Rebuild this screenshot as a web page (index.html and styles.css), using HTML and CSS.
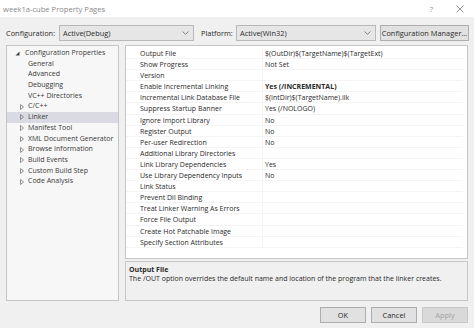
FILE: index.html
```html
<!DOCTYPE html>
<html lang="en">

<head>
  <meta charset="UTF-8">
  <title>week1a-cube Property Pages</title>
  <link rel="stylesheet" href="styles.css">
</head>

<body>
  <div class="dialog">
    <!-- title bar -->
    <div class="titlebar">
      <span class="title">week1a-cube Property Pages</span>
      <span class="help">?</span>
      <span class="close">
        <svg width="8" height="8" viewBox="0 0 8 8"><path d="M0.5 0.5L7.5 7.5M7.5 0.5L0.5 7.5" stroke="#888" stroke-width="0.9"/></svg>
      </span>
    </div>

    <!-- configuration row -->
    <div class="configrow">
      <span class="label">Configuration:</span>
      <div class="select sel-config">
        <span>Active(Debug)</span>
        <svg class="arrow" width="7" height="4" viewBox="0 0 7 4"><path d="M0.5 0.5L3.5 3.3L6.5 0.5" fill="none" stroke="#777" stroke-width="0.9"/></svg>
      </div>
      <span class="label plat">Platform:</span>
      <div class="select sel-platform">
        <span>Active(Win32)</span>
        <svg class="arrow" width="7" height="4" viewBox="0 0 7 4"><path d="M0.5 0.5L3.5 3.3L6.5 0.5" fill="none" stroke="#777" stroke-width="0.9"/></svg>
      </div>
      <div class="btn cfgmgr">Configuration Manager...</div>
    </div>

    <div class="main">
      <!-- tree -->
      <div class="tree">
        <div class="node top">
          <svg class="tri" width="5" height="5" viewBox="0 0 5 5"><path d="M4.5 0.5L4.5 4.5L0.5 4.5Z" fill="#444"/></svg>
          Configuration Properties
        </div>
        <div class="node leaf">General</div>
        <div class="node leaf">Advanced</div>
        <div class="node leaf">Debugging</div>
        <div class="node leaf">VC++ Directories</div>
        <div class="node sub"><svg class="tri" width="4" height="6" viewBox="0 0 4 6"><path d="M0.5 0.5L3.5 3L0.5 5.5Z" fill="none" stroke="#777" stroke-width="0.8"/></svg>C/C++</div>
        <div class="node sub selected"><svg class="tri" width="4" height="6" viewBox="0 0 4 6"><path d="M0.5 0.5L3.5 3L0.5 5.5Z" fill="none" stroke="#777" stroke-width="0.8"/></svg>Linker</div>
        <div class="node sub"><svg class="tri" width="4" height="6" viewBox="0 0 4 6"><path d="M0.5 0.5L3.5 3L0.5 5.5Z" fill="none" stroke="#777" stroke-width="0.8"/></svg>Manifest Tool</div>
        <div class="node sub"><svg class="tri" width="4" height="6" viewBox="0 0 4 6"><path d="M0.5 0.5L3.5 3L0.5 5.5Z" fill="none" stroke="#777" stroke-width="0.8"/></svg>XML Document Generator</div>
        <div class="node sub"><svg class="tri" width="4" height="6" viewBox="0 0 4 6"><path d="M0.5 0.5L3.5 3L0.5 5.5Z" fill="none" stroke="#777" stroke-width="0.8"/></svg>Browse Information</div>
        <div class="node sub"><svg class="tri" width="4" height="6" viewBox="0 0 4 6"><path d="M0.5 0.5L3.5 3L0.5 5.5Z" fill="none" stroke="#777" stroke-width="0.8"/></svg>Build Events</div>
        <div class="node sub"><svg class="tri" width="4" height="6" viewBox="0 0 4 6"><path d="M0.5 0.5L3.5 3L0.5 5.5Z" fill="none" stroke="#777" stroke-width="0.8"/></svg>Custom Build Step</div>
        <div class="node sub"><svg class="tri" width="4" height="6" viewBox="0 0 4 6"><path d="M0.5 0.5L3.5 3L0.5 5.5Z" fill="none" stroke="#777" stroke-width="0.8"/></svg>Code Analysis</div>
      </div>

      <div class="right">
        <!-- property grid -->
        <div class="grid">
          <div class="row"><span class="name">Output File</span><span class="value">$(OutDir)$(TargetName)$(TargetExt)</span></div>
          <div class="row"><span class="name">Show Progress</span><span class="value">Not Set</span></div>
          <div class="row"><span class="name">Version</span><span class="value"></span></div>
          <div class="row"><span class="name">Enable Incremental Linking</span><span class="value bold">Yes (/INCREMENTAL)</span></div>
          <div class="row"><span class="name">Incremental Link Database File</span><span class="value">$(IntDir)$(TargetName).ilk</span></div>
          <div class="row"><span class="name">Suppress Startup Banner</span><span class="value">Yes (/NOLOGO)</span></div>
          <div class="row"><span class="name">Ignore Import Library</span><span class="value">No</span></div>
          <div class="row"><span class="name">Register Output</span><span class="value">No</span></div>
          <div class="row"><span class="name">Per-user Redirection</span><span class="value">No</span></div>
          <div class="row"><span class="name">Additional Library Directories</span><span class="value"></span></div>
          <div class="row"><span class="name">Link Library Dependencies</span><span class="value">Yes</span></div>
          <div class="row"><span class="name">Use Library Dependency Inputs</span><span class="value">No</span></div>
          <div class="row"><span class="name">Link Status</span><span class="value"></span></div>
          <div class="row"><span class="name">Prevent Dll Binding</span><span class="value"></span></div>
          <div class="row"><span class="name">Treat Linker Warning As Errors</span><span class="value"></span></div>
          <div class="row"><span class="name">Force File Output</span><span class="value"></span></div>
          <div class="row"><span class="name">Create Hot Patchable Image</span><span class="value"></span></div>
          <div class="row"><span class="name">Specify Section Attributes</span><span class="value"></span></div>
        </div>

        <!-- description -->
        <div class="desc">
          <div class="desc-title">Output File</div>
          <div class="desc-text">The /OUT option overrides the default name and location of the program that the linker creates.</div>
        </div>
      </div>
    </div>

    <div class="buttons">
      <div class="btn">OK</div>
      <div class="btn">Cancel</div>
      <div class="btn disabled">Apply</div>
    </div>
  </div>
</body>

</html>
```

FILE: styles.css
```css
body {
  margin: 0;
  background-color: #f0f0f0;
  font-family: 'Open Sans', 'Noto Sans', sans-serif;
  font-size: 7px;
  color: #2a2a2a;
}

.dialog {
  width: 474px;
  height: 328px;
  overflow: hidden;
}

/* title bar */
.titlebar {
  height: 17px;
  background-color: #ffffff;
  display: flex;
  align-items: center;
  padding-left: 3px;
}

.titlebar .title {
  flex: 1;
  color: #8a8a8a;
  font-size: 7.6px;
}

.titlebar .help {
  color: #8a8a8a;
  font-size: 7.6px;
  margin-right: 23px;
}

.titlebar .close {
  display: flex;
  margin-right: 10px;
}

/* configuration row */
.configrow {
  display: flex;
  align-items: center;
  height: 16px;
  margin-top: 8px;
  padding: 0 5px 0 6px;
}

.configrow .label {
  font-size: 7.4px;
  width: 53px;
}

.configrow .label.plat {
  width: 35px;
  margin-left: 7px;
}

.select {
  height: 14px;
  border: 1px solid #b9b9b9;
  background-color: #e6e6e6;
  display: flex;
  align-items: center;
  padding: 0 4px 0 3px;
  font-size: 7.4px;
  box-sizing: content-box;
}

.select span {
  flex: 1;
}

.sel-config {
  width: 126px;
}

.sel-platform {
  width: 131px;
}

.btn {
  height: 14px;
  border: 1px solid #adadad;
  background-color: #e1e1e1;
  display: flex;
  align-items: center;
  justify-content: center;
  font-size: 7.4px;
}

.btn.cfgmgr {
  margin-left: 4px;
  flex: 1;
}

.btn.disabled {
  color: #a3a3a3;
  border-color: #c8c8c8;
  background-color: #d9d9d9;
}

/* main area */
.main {
  display: flex;
  gap: 6px;
  height: 256px;
  margin-top: 4px;
  padding: 0 6px 0 6px;
}

.tree {
  width: 111px;
  border: 1px solid #c5c5c5;
  background-color: #f7f7f7;
  padding-top: 2px;
  color: #3a3a3a;
}

.node {
  height: 10.7px;
  line-height: 10.7px;
  display: flex;
  align-items: center;
  white-space: nowrap;
}

.node.top {
  padding-left: 8px;
}

.node.top .tri {
  margin-right: 5px;
}

.node.leaf {
  padding-left: 21px;
}

.node.sub {
  padding-left: 13px;
}

.node.sub .tri {
  margin-right: 4px;
}

.node.selected {
  background-color: #dadae3;
}

.right {
  flex: 1;
  display: flex;
  flex-direction: column;
  gap: 2px;
}

.grid {
  flex: 1;
  border: 1px solid #c5c5c5;
  background-color: #ffffff;
  padding: 2px 4px 0 0;
}

.row {
  height: 11.1px;
  line-height: 11.1px;
  display: flex;
  border-bottom: 1px solid #f4f4f4;
  box-sizing: border-box;
  white-space: nowrap;
}

.row .name {
  width: 122px;
  padding-left: 14px;
  border-right: 1px solid #f4f4f4;
}

.row .value {
  flex: 1;
  padding-left: 2px;
}

.row .bold {
  font-weight: bold;
}

.desc {
  height: 35px;
  border: 1px solid #c5c5c5;
  padding: 3px 3px 0 3px;
}

.desc-title {
  font-weight: bold;
  line-height: 9px;
}

.desc-text {
  line-height: 10px;
}

/* bottom buttons */
.buttons {
  display: flex;
  justify-content: flex-end;
  gap: 5px;
  margin-top: 6px;
  padding-right: 6px;
}

.buttons .btn {
  width: 44px;
}
```
